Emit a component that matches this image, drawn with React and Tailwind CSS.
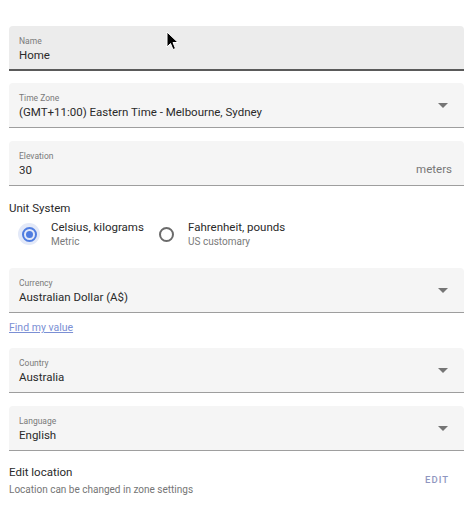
import React from 'react';

const Arrow = () => (
  <svg className="w-[10px] h-[5px] mr-[16px]" viewBox="0 0 10 5">
    <path d="M0 0 L5 5 L10 0 Z" fill="#757575" />
  </svg>
);

const Field = ({ label, value, focused, select, suffix, className = '' }) => (
  <div
    className={`h-[45px] flex items-center rounded-t-[4px] ${
      focused ? 'bg-[#ececec] border-b-2 border-[#5a5a5a]' : 'bg-[#f5f5f5] border-b border-[#9e9e9e]'
    } ${className}`}
  >
    <div className="flex-1 pl-[10px] pt-[3px]">
      <div className="text-[8.5px] leading-[10px] text-[#7a7a7a]">{label}</div>
      <div className="text-[11.5px] leading-[16px] text-[#2a2a2a] mt-[1px]">{value}</div>
    </div>
    {select && <Arrow />}
    {suffix && <div className="text-[11.5px] text-[#777] pr-[12px] pt-[13px]">{suffix}</div>}
  </div>
);

const Radio = ({ checked, title, sub, className = '' }) => (
  <div className={`flex items-start ${className}`}>
    <div className="w-[40px] h-[30px] flex items-center justify-center">
      {checked ? (
        <div className="w-[22px] h-[22px] rounded-full bg-[#e3e9f8] flex items-center justify-center">
          <div className="w-[15px] h-[15px] rounded-full border-2 border-[#4f7ce0] flex items-center justify-center">
            <div className="w-[7px] h-[7px] rounded-full bg-[#4f7ce0]" />
          </div>
        </div>
      ) : (
        <div className="w-[15px] h-[15px] rounded-full border-2 border-[#6b6b6b]" />
      )}
    </div>
    <div className="ml-[2px] pt-[1px]">
      <div className="text-[11.5px] leading-[15px] text-[#2a2a2a]">{title}</div>
      <div className="text-[10px] leading-[13px] text-[#7a7a7a]">{sub}</div>
    </div>
  </div>
);

export default function App() {
  return (
    <div className="relative w-[474px] h-[520px] bg-white font-['Roboto','Liberation_Sans',sans-serif]">
      <div className="pl-[9px] pr-[10px] pt-[26px] flex flex-col">
        <Field label="Name" value="Home" focused />
        <Field className="mt-[12px]" label="Time Zone" value="(GMT+11:00) Eastern Time - Melbourne, Sydney" select />
        <Field className="mt-[13px]" label="Elevation" value="30" suffix="meters" />

        <div className="mt-[14px] text-[11.5px] leading-[16px] text-[#2a2a2a]">Unit System</div>
        <div className="flex mt-[3px]">
          <Radio className="w-[137px]" checked title="Celsius, kilograms" sub="Metric" />
          <Radio title="Fahrenheit, pounds" sub="US customary" />
        </div>

        <Field className="mt-[19px]" label="Currency" value="Australian Dollar (A$)" select />
        <div className="mt-[7px] h-[15px] text-[10.5px] leading-[15px] text-[#7b8fd4] underline">Find my value</div>
        <Field className="mt-[13px]" label="Country" value="Australia" select />
        <Field className="mt-[13px]" label="Language" value="English" select />

        <div className="mt-[13px] flex items-center">
          <div className="flex-1">
            <div className="text-[11.5px] leading-[16px] text-[#2a2a2a]">Edit location</div>
            <div className="text-[10px] leading-[13px] text-[#757575] mt-[3px]">Location can be changed in zone settings</div>
          </div>
          <div className="text-[9.5px] tracking-[1px] font-medium text-[#8f96c0] pr-[15px] pt-[1px]">EDIT</div>
        </div>
      </div>

      <svg className="absolute left-[166px] top-[31px]" width="14" height="20" viewBox="0 0 14 20">
        <path d="M1 1 L1 16 L4.5 12.5 L7 18.5 L9.5 17.5 L7 11.5 L12 11.5 Z" fill="#000" stroke="#fff" strokeWidth="1" />
      </svg>
    </div>
  );
}
